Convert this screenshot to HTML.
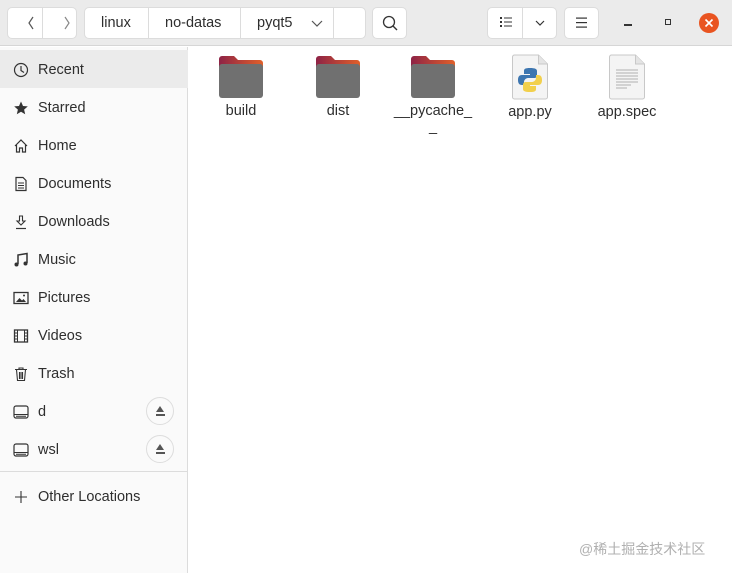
<!DOCTYPE html>
<html><head><meta charset="utf-8"><style>
*{box-sizing:border-box;margin:0;padding:0}
body{width:732px;height:573px;overflow:hidden;background:#fff;font-family:"Liberation Sans","Noto Sans CJK SC",sans-serif;font-size:14.5px;color:#2e2e2e;position:relative}
.hdr{position:absolute;left:0;top:0;width:732px;height:46px;background:#ebebeb;border-bottom:1px solid #d6d6d6}
.btn{position:absolute;top:7px;height:32px;background:#fff;border:1px solid #dcdcdc;border-radius:5px}
.side{position:absolute;left:0;top:47px;width:188px;height:526px;background:#fafafa;border-right:1px solid #dcdcdc}
.row{position:absolute;left:0;width:188px;height:38px}
.row svg{position:absolute;left:13px;top:12px}
.row span{position:absolute;left:38px;top:12px}
.ej{position:absolute;left:146px;top:5px;width:28px;height:28px;border:1px solid #ddd;border-radius:50%;background:#fafafa}
.ej:after{content:"";position:absolute;left:9px;top:8px;border-left:4.5px solid transparent;border-right:4.5px solid transparent;border-bottom:6px solid #555}
.ej:before{content:"";position:absolute;left:9px;top:16px;width:9px;height:1.5px;background:#555}
.it{position:absolute;text-align:center;width:90px;font-size:14.5px}
.it svg{display:block;margin:0 auto 4px}
</style></head><body>
<div class="hdr">
 <div class="btn" style="left:7px;width:70px"><div style="position:absolute;left:34px;top:0;width:1px;height:30px;background:#dcdcdc"></div>
  <svg width="70" height="30" style="position:absolute;left:0;top:0"><path d="M25 9l-4 6 4 6" fill="none" stroke="#555" stroke-width="1.2"/><path d="M57 9l4 6-4 6" fill="none" stroke="#888" stroke-width="1.2"/></svg></div>
 <div class="btn" style="left:84px;width:282px;font-size:14.5px">
  <div style="position:absolute;left:63px;top:0;width:1px;height:30px;background:#dcdcdc"></div>
  <div style="position:absolute;left:155px;top:0;width:1px;height:30px;background:#dcdcdc"></div>
  <div style="position:absolute;left:248px;top:0;width:1px;height:30px;background:#dcdcdc"></div>
  <span style="position:absolute;left:16px;top:7px">linux</span>
  <span style="position:absolute;left:80px;top:7px">no-datas</span>
  <span style="position:absolute;left:172px;top:7px">pyqt5</span>
  <svg width="12" height="8" style="position:absolute;left:226px;top:12px"><path d="M1 1l5 5 5-5" fill="none" stroke="#555" stroke-width="1.2"/></svg>
 </div>
 <div class="btn" style="left:372px;width:35px"><svg width="33" height="30"><circle cx="16" cy="14" r="5.5" fill="none" stroke="#333" stroke-width="1.3"/><path d="M20 18l4 4" stroke="#333" stroke-width="1.4"/></svg></div>
 <div class="btn" style="left:487px;width:70px"><div style="position:absolute;left:34px;top:0;width:1px;height:30px;background:#dcdcdc"></div>
  <svg width="70" height="30" style="position:absolute;left:0;top:0"><g fill="#333"><rect x="12" y="9" width="2" height="2"/><rect x="12" y="13" width="2" height="2"/><rect x="12" y="17" width="2" height="2"/><rect x="16" y="9.5" width="8" height="1"/><rect x="16" y="13.5" width="8" height="1"/><rect x="16" y="17.5" width="8" height="1"/></g><path d="M48 13l4 4 4-4" fill="none" stroke="#333" stroke-width="1.2"/></svg></div>
 <div class="btn" style="left:564px;width:35px"><svg width="33" height="30"><g fill="#333"><rect x="11" y="9.5" width="11" height="1.2"/><rect x="11" y="14" width="11" height="1.2"/><rect x="11" y="18.5" width="11" height="1.2"/></g></svg></div>
 <div style="position:absolute;left:624px;top:24px;width:8px;height:1.5px;background:#333"></div>
 <div style="position:absolute;left:665px;top:19px;width:6px;height:6px;border:1px solid #333"></div>
 <div style="position:absolute;left:699px;top:13px;width:20px;height:20px;border-radius:50%;background:#e95420"><svg width="20" height="20"><path d="M6.5 6.5l7 7M13.5 6.5l-7 7" stroke="#fff" stroke-width="1.6"/></svg></div>
</div>
<div class="side">
 <div class="row" style="top:3px;background:#ebebeb"><svg width="16" height="16"><circle cx="8" cy="8" r="6.5" fill="none" stroke="#333" stroke-width="1.2"/><path d="M8 4v4.5l3 2" fill="none" stroke="#333" stroke-width="1.2"/></svg><span>Recent</span></div>
 <div class="row" style="top:41px"><svg width="16" height="16"><path d="M8 1.5l2 4.5 4.8.4-3.7 3.2 1.1 4.7L8 11.8 3.8 14.3l1.1-4.7L1.2 6.4 6 6z" fill="#333"/></svg><span>Starred</span></div>
 <div class="row" style="top:79px"><svg width="16" height="16"><path d="M2 8L8 2l6 6M3.5 7v7h3v-4h3v4h3V7" fill="none" stroke="#333" stroke-width="1.2"/></svg><span>Home</span></div>
 <div class="row" style="top:117px"><svg width="16" height="16"><path d="M3 1.5h7l3 3v10H3z" fill="none" stroke="#333" stroke-width="1.2"/><path d="M5 7h6M5 9.5h6M5 12h6" stroke="#333"/></svg><span>Documents</span></div>
 <div class="row" style="top:155px"><svg width="16" height="16"><path d="M6.5 2h3v5h2.5L8 11 4 7h2.5z" fill="none" stroke="#333" stroke-width="1.1"/><path d="M3 14.5h10" stroke="#333" stroke-width="1.2"/></svg><span>Downloads</span></div>
 <div class="row" style="top:193px"><svg width="16" height="16"><path d="M5 12V3l9-1.5V11" fill="none" stroke="#333" stroke-width="1.5"/><circle cx="3.5" cy="12.5" r="2" fill="#333"/><circle cx="12.5" cy="11.5" r="2" fill="#333"/></svg><span>Music</span></div>
 <div class="row" style="top:231px"><svg width="16" height="16"><rect x="1" y="2.5" width="14" height="11" fill="none" stroke="#333" stroke-width="1.3"/><path d="M3 12l3.5-4 2.5 2.5 1.5-1.5 2.5 3z" fill="#333"/><circle cx="11" cy="5.5" r="1" fill="#333"/></svg><span>Pictures</span></div>
 <div class="row" style="top:269px"><svg width="16" height="16"><rect x="1.5" y="2" width="13" height="12" fill="none" stroke="#333" stroke-width="1.3"/><path d="M4.5 2v12M11.5 2v12M1.5 8h3M11.5 8h3M1.5 5h3M11.5 5h3M1.5 11h3M11.5 11h3" stroke="#333"/></svg><span>Videos</span></div>
 <div class="row" style="top:307px"><svg width="16" height="16"><path d="M2 3.5h12M6 3.5V2h4v1.5M3.5 3.5l1 11h7l1-11M6.5 6v7M8 6v7M9.5 6v7" fill="none" stroke="#333" stroke-width="1.1"/></svg><span>Trash</span></div>
 <div class="row" style="top:345px"><svg width="16" height="16"><rect x="1" y="2" width="14" height="12" rx="2" fill="none" stroke="#333" stroke-width="1.2"/><path d="M1 10.5h14M3 12.3h10" stroke="#333"/></svg><span>d</span><div class="ej"></div></div>
 <div class="row" style="top:383px"><svg width="16" height="16"><rect x="1" y="2" width="14" height="12" rx="2" fill="none" stroke="#333" stroke-width="1.2"/><path d="M1 10.5h14M3 12.3h10" stroke="#333"/></svg><span>wsl</span><div class="ej"></div></div>
 <div style="position:absolute;left:0;top:424px;width:188px;height:1px;background:#dcdcdc"></div>
 <div class="row" style="top:430px"><svg width="16" height="16"><path d="M8 2v12M2 8h12" stroke="#333" stroke-width="1.1"/></svg><span>Other Locations</span></div>
</div>
<svg width="0" height="0" style="position:absolute"><defs><linearGradient id="ft" x1="0" x2="1"><stop offset="0" stop-color="#8e2346"/><stop offset="1" stop-color="#e0602a"/></linearGradient></defs></svg>
<div class="it" style="left:196px;top:55px"><svg width="48" height="44"><path d="M2 4a3 3 0 0 1 3-3h12l4 4h22a3 3 0 0 1 3 3v6H2z" fill="url(#ft)"/><rect x="2" y="9" width="44" height="34" rx="3" fill="#707070"/></svg>build</div>
<div class="it" style="left:293px;top:55px"><svg width="48" height="44"><path d="M2 4a3 3 0 0 1 3-3h12l4 4h22a3 3 0 0 1 3 3v6H2z" fill="url(#ft)"/><rect x="2" y="9" width="44" height="34" rx="3" fill="#707070"/></svg>dist</div>
<div class="it" style="left:388px;top:55px"><svg width="48" height="44"><path d="M2 4a3 3 0 0 1 3-3h12l4 4h22a3 3 0 0 1 3 3v6H2z" fill="url(#ft)"/><rect x="2" y="9" width="44" height="34" rx="3" fill="#707070"/></svg>__pycache_<br>_</div>
<div class="it" style="left:485px;top:54px"><svg width="40" height="46"><path d="M2.5 3a2 2 0 0 1 2-2h24l9 9v33a2 2 0 0 1-2 2h-31a2 2 0 0 1-2-2z" fill="#f4f4f4" stroke="#c8c8c8"/><path d="M28.5 1v9h9" fill="#e4e4e4" stroke="#c8c8c8"/><path d="M20 14c-5 0-6 1-6 3v3h6v1h-8c-3 0-4 2-4 5s1 5 4 5h2v-3c0-2 2-4 4-4h6c2 0 3-1 3-3v-4c0-2-2-3-7-3z" fill="#3d76b0"/><path d="M20 38c5 0 6-1 6-3v-3h-6v-1h8c3 0 4-2 4-5s-1-5-4-5h-2v3c0 2-2 4-4 4h-6c-2 0-3 1-3 3v4c0 2 2 3 7 3z" fill="#f2d04c"/></svg>app.py</div>
<div class="it" style="left:582px;top:54px"><svg width="40" height="46"><path d="M2.5 3a2 2 0 0 1 2-2h24l9 9v33a2 2 0 0 1-2 2h-31a2 2 0 0 1-2-2z" fill="#f4f4f4" stroke="#c8c8c8"/><path d="M28.5 1v9h9" fill="#e4e4e4" stroke="#c8c8c8"/><path d="M9 16h22M9 19h22M9 22h22M9 25h22M9 28h22M9 31h15M9 34h11" stroke="#999" stroke-width="0.8"/></svg>app.spec</div>
<div style="position:absolute;left:579px;top:539px;font-size:14px;color:#b0b0b0">@稀土掘金技术社区</div>
</body></html>
